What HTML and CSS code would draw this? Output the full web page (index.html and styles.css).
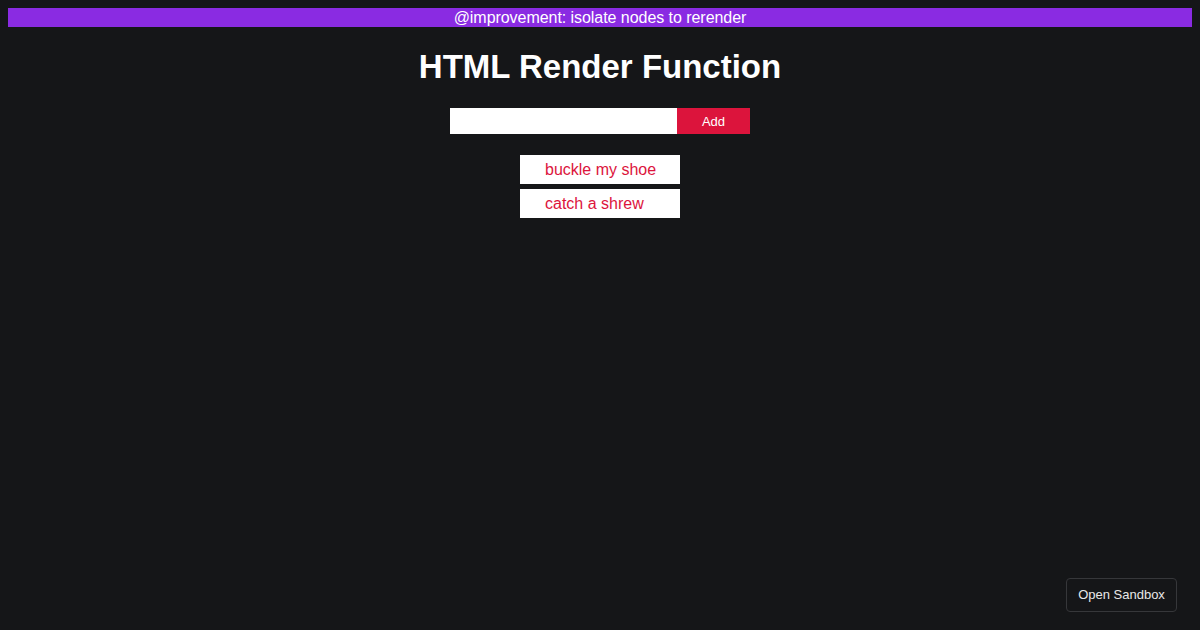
FILE: index.html
```html
<!DOCTYPE html>
<html lang="en">
<head>
  <meta charset="UTF-8" />
  <meta name="viewport" content="width=device-width, initial-scale=1.0" />
  <title>HTML Render Function</title>
  <link rel="stylesheet" href="styles.css">
</head>
<body>
  <div class="note">@improvement: isolate nodes to rerender</div>
  <h1>HTML Render Function</h1>
  <form class="add-form" onsubmit="return false;">
    <input type="text" id="todoText" />
    <button type="submit">Add</button>
  </form>
  <ul class="todos">
    <li>buckle my shoe</li>
    <li>catch a shrew</li>
  </ul>
  <a class="sandbox-btn" href="#">Open Sandbox</a>
</body>
</html>
```

FILE: styles.css
```css
body { margin: 8px; background: #151618; color: #fff; font-family: "Liberation Sans", Arial, sans-serif; }
.note { background: #8a2be2; color: #fff; text-align: center; font-size: 16px; line-height: 19px; letter-spacing: -0.05px; }
h1 { text-align: center; font-size: 33px; margin: 21px 0 22px; line-height: 38px; }
.add-form { display: flex; justify-content: center; margin: 0; }
.add-form input { width: 227px; height: 26px; box-sizing: border-box; border: none; padding: 0 6px; margin: 0; background: #fff; font-size: 13px; }
.add-form button { width: 73px; height: 26px; border: none; margin: 0; background: #dc143c; color: #fff; font-size: 13px; font-family: "Liberation Sans", Arial, sans-serif; }
.todos { list-style: none; padding: 0; margin: 21px 0 0; display: flex; flex-direction: column; align-items: center; gap: 5px; }
.todos li { width: 160px; height: 29px; box-sizing: border-box; background: #fff; color: #dc143c; font-size: 16px; line-height: 29px; padding-left: 25px; }
.sandbox-btn { position: fixed; right: 23px; bottom: 18px; width: 111px; height: 34px; line-height: 32px; box-sizing: border-box; border: 1px solid #36373a; border-radius: 4px; background: #151618; color: #e8e8e8; font-family: "Liberation Sans", Arial, sans-serif; font-size: 13px; text-align: center; white-space: nowrap; text-decoration: none; }
```
